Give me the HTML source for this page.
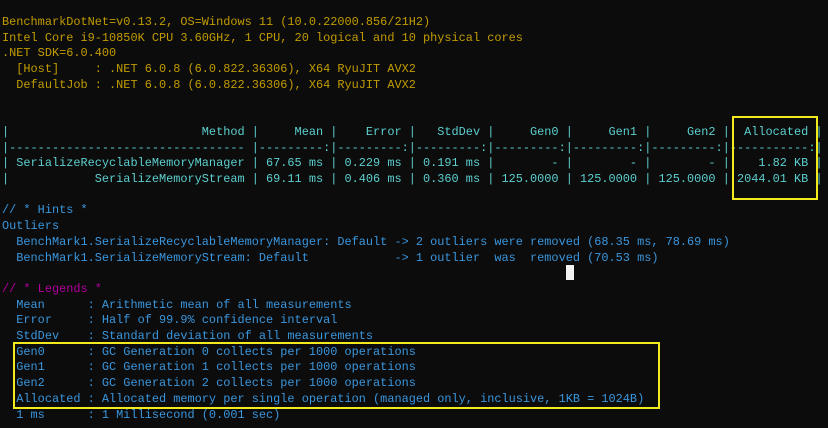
<!DOCTYPE html>
<html><head><meta charset="utf-8"><style>
html,body{margin:0;padding:0;background:#0c0c0c;width:828px;height:428px;overflow:hidden}
pre{margin:0;position:absolute;left:2px;top:15px;font-family:"Liberation Mono",monospace;font-size:11.9px;line-height:15.7px;color:#c19c00;white-space:pre}
.c{color:#5ccfcf}.b{color:#3a96dd}.m{color:#b4009e}
.box{position:absolute;border:2px solid #f2ea1c;box-sizing:border-box}
.cur{position:absolute;left:566px;top:265px;width:8px;height:15px;background:#f2f2f2}
</style></head><body>
<pre>BenchmarkDotNet=v0.13.2, OS=Windows 11 (10.0.22000.856/21H2)
Intel Core i9-10850K CPU 3.60GHz, 1 CPU, 20 logical and 10 physical cores
.NET SDK=6.0.400
  [Host]     : .NET 6.0.8 (6.0.822.36306), X64 RyuJIT AVX2
  DefaultJob : .NET 6.0.8 (6.0.822.36306), X64 RyuJIT AVX2


<span class="c">|                           Method |     Mean |    Error |   StdDev |     Gen0 |     Gen1 |     Gen2 |  Allocated |
|--------------------------------- |---------:|---------:|---------:|---------:|---------:|---------:|-----------:|
| SerializeRecyclableMemoryManager | 67.65 ms | 0.229 ms | 0.191 ms |        - |        - |        - |    1.82 KB |
|            SerializeMemoryStream | 69.11 ms | 0.406 ms | 0.360 ms | 125.0000 | 125.0000 | 125.0000 | 2044.01 KB |</span>

<span class="b">// * Hints *
Outliers
  BenchMark1.SerializeRecyclableMemoryManager: Default -> 2 outliers were removed (68.35 ms, 78.69 ms)
  BenchMark1.SerializeMemoryStream: Default            -> 1 outlier  was  removed (70.53 ms)</span>

<span class="m">// * Legends *</span>
<span class="b">  Mean      : Arithmetic mean of all measurements
  Error     : Half of 99.9% confidence interval
  StdDev    : Standard deviation of all measurements
  Gen0      : GC Generation 0 collects per 1000 operations
  Gen1      : GC Generation 1 collects per 1000 operations
  Gen2      : GC Generation 2 collects per 1000 operations
  Allocated : Allocated memory per single operation (managed only, inclusive, 1KB = 1024B)
  1 ms      : 1 Millisecond (0.001 sec)</span></pre>
<div class="box" style="left:732px;top:116px;width:86px;height:84px"></div>
<div class="box" style="left:13px;top:342px;width:647px;height:67px"></div>
<div class="cur"></div>
</body></html>
